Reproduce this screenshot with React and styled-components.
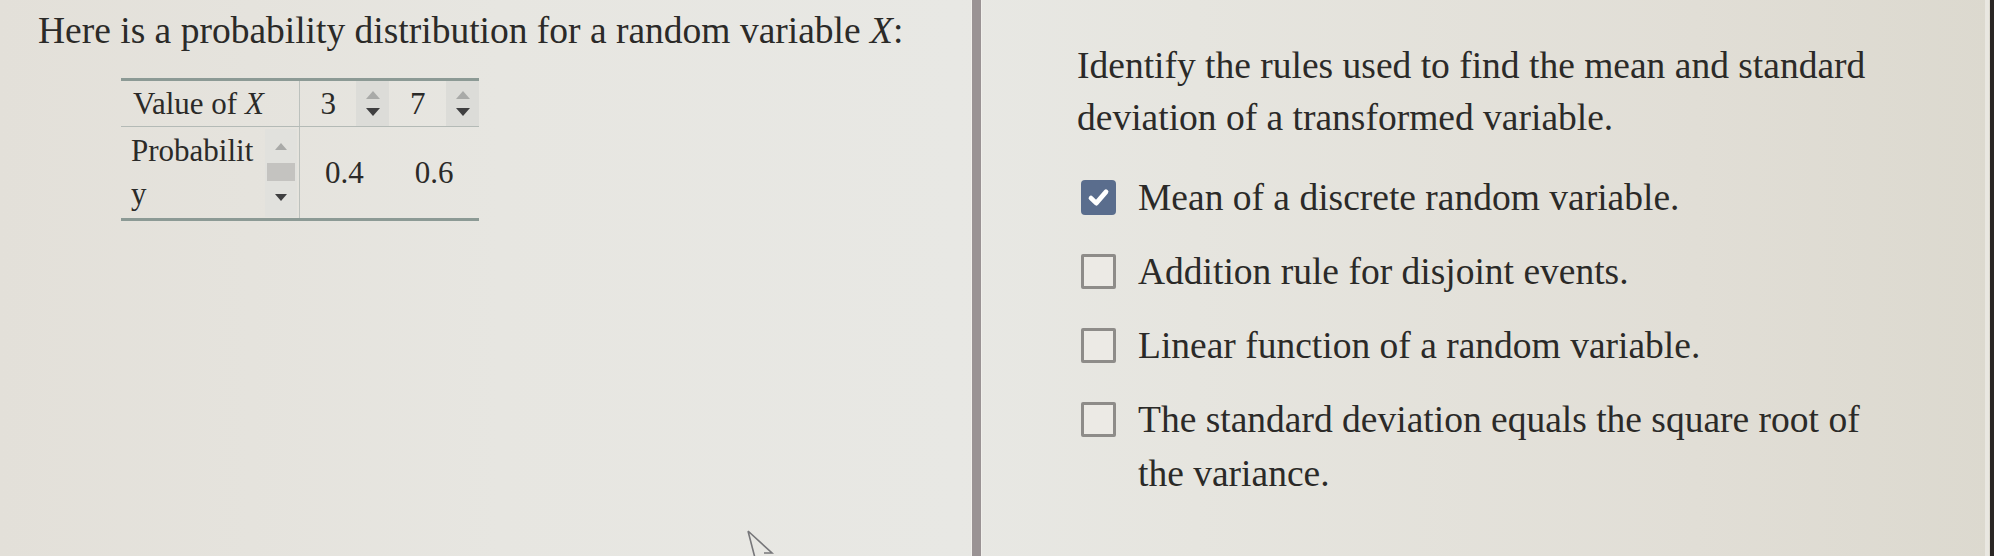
import React from "react";
import styled, { createGlobalStyle } from "styled-components";

const GlobalStyle = createGlobalStyle`
  html, body {
    margin: 0;
    padding: 0;
    overflow: hidden;
  }
  body {
    font-family: "Liberation Serif", "Times New Roman", serif;
    color: #2b2a28;
  }
`;

const options = [
  { label: "Mean of a discrete random variable.", checked: true },
  { label: "Addition rule for disjoint events.", checked: false },
  { label: "Linear function of a random variable.", checked: false },
  {
    label: "The standard deviation equals the square root of the variance.",
    checked: false,
  },
];

const App = () => {
  return (
    <Page>
      <GlobalStyle />
      <LeftPanel>
        <Title>
          Here is a probability distribution for a random variable <i>X</i>:
        </Title>
        <Table>
          <tbody>
            <tr>
              <HeadCell>
                Value of <i>X</i>
              </HeadCell>
              <ValueCell>
                <SpinBox>
                  <span>3</span>
                  <Spinner>
                    <Arrow up />
                    <Arrow />
                  </Spinner>
                </SpinBox>
              </ValueCell>
              <ValueCell>
                <SpinBox>
                  <span>7</span>
                  <Spinner>
                    <Arrow up />
                    <Arrow />
                  </Spinner>
                </SpinBox>
              </ValueCell>
            </tr>
            <tr>
              <HeadCell tall>
                <ScrollField>
                  <FieldText>Probability</FieldText>
                  <ScrollBar>
                    <Arrow up small />
                    <Thumb />
                    <Arrow small />
                  </ScrollBar>
                </ScrollField>
              </HeadCell>
              <ValueCell center>0.4</ValueCell>
              <ValueCell center>0.6</ValueCell>
            </tr>
          </tbody>
        </Table>
        <Cursor viewBox="0 0 30 30">
          <path
            d="M1 1 L8 28 M1 1 L25 23 L17 23"
            fill="none"
            stroke="#77777a"
            strokeWidth="1.6"
          />
        </Cursor>
      </LeftPanel>
      <Divider />
      <RightPanel>
        <Question>
          Identify the rules used to find the mean and standard deviation of a
          transformed variable.
        </Question>
        <OptionList>
          {options.map((o) => (
            <Option key={o.label}>
              <CheckBox checked={o.checked}>
                {o.checked && (
                  <svg viewBox="0 0 20 20" width="25" height="25">
                    <path
                      d="M4 10.5 L8.2 14.5 L16 5.5"
                      fill="none"
                      stroke="#ffffff"
                      strokeWidth="3.8"
                      strokeLinecap="round"
                      strokeLinejoin="round"
                    />
                  </svg>
                )}
              </CheckBox>
              <OptionText>{o.label}</OptionText>
            </Option>
          ))}
        </OptionList>
        <EdgeLine />
      </RightPanel>
    </Page>
  );
};

export default App;

const Page = styled.div`
  display: flex;
  width: 1994px;
  height: 556px;
  background: linear-gradient(
    90deg,
    #e3e0d9 0%,
    #e7e6e1 25%,
    #e8e8e4 48%,
    #e6e5df 60%,
    #e1ded6 85%,
    #dcd9cf 100%
  );
`;

const LeftPanel = styled.div`
  position: relative;
  width: 972px;
  padding: 9px 0 0 38px;
  box-sizing: border-box;
`;

const Title = styled.div`
  font-size: 37.5px;
  line-height: 44px;
  white-space: nowrap;

  i {
    font-style: italic;
  }
`;

const Table = styled.table`
  margin: 25px 0 0 83px;
  border-collapse: collapse;
  border-top: 3px solid #8c9a95;
  border-bottom: 3px solid #8c9a95;
  font-size: 31px;
`;

const HeadCell = styled.td`
  width: 178px;
  box-sizing: border-box;
  height: ${(p) => (p.tall ? "92px" : "47px")};
  padding: ${(p) => (p.tall ? "0 2px 0 10px" : "0 0 0 12px")};
  border-right: 1px solid #bcc1bd;
  border-bottom: 1px solid #b4bab6;
  vertical-align: ${(p) => (p.tall ? "top" : "middle")};
  white-space: nowrap;

  i {
    font-style: italic;
  }
`;

const ValueCell = styled.td`
  width: 90px;
  box-sizing: border-box;
  padding: 0;
  border-bottom: 1px solid #b4bab6;
  text-align: ${(p) => (p.center ? "center" : "left")};
  vertical-align: middle;
`;

const SpinBox = styled.div`
  display: flex;
  align-items: center;
  justify-content: space-between;
  height: 45px;
  padding-left: 21px;

  span {
    line-height: 1;
  }
`;

const Spinner = styled.div`
  display: flex;
  flex-direction: column;
  align-items: center;
  justify-content: center;
  gap: 9px;
  width: 33px;
  height: 45px;
  background: #dcdcd8;
`;

const Arrow = styled.div`
  width: 0;
  height: 0;
  border-left: ${(p) => (p.small ? "6px" : "7px")} solid transparent;
  border-right: ${(p) => (p.small ? "6px" : "7px")} solid transparent;
  ${(p) =>
    p.up
      ? `border-bottom: ${p.small ? "7px" : "8px"} solid #a9aaa8;`
      : `border-top: ${p.small ? "7px" : "8px"} solid #3f3f40;`}
`;

const ScrollField = styled.div`
  display: flex;
  justify-content: space-between;
  height: 91px;
`;

const FieldText = styled.div`
  width: 126px;
  padding-top: 2px;
  line-height: 43px;
  word-break: break-all;
  white-space: normal;
`;

const ScrollBar = styled.div`
  display: flex;
  flex-direction: column;
  align-items: center;
  justify-content: space-between;
  box-sizing: border-box;
  width: 32px;
  height: 88px;
  margin-top: 2px;
  padding: 14px 0 16px;
  background: #e1e1dd;
`;

const Thumb = styled.div`
  width: 28px;
  height: 18px;
  background: #c4c3c0;
`;

const Cursor = styled.svg`
  position: absolute;
  left: 747px;
  top: 530px;
  width: 30px;
  height: 30px;
`;

const Divider = styled.div`
  width: 9px;
  flex-shrink: 0;
  background: #9a9394;
  box-shadow: -1px 0 0 #f1f0ec, 1px 0 0 #f0efeb;
`;

const RightPanel = styled.div`
  position: relative;
  flex: 1;
  padding: 40px 0 0 96px;
  box-sizing: border-box;
`;

const Question = styled.div`
  width: 820px;
  font-size: 37.5px;
  line-height: 52px;
`;

const OptionList = styled.div`
  display: flex;
  flex-direction: column;
  gap: 20px;
  margin: 27px 0 0 4px;
`;

const Option = styled.div`
  display: flex;
  align-items: flex-start;
  gap: 22px;
`;

const CheckBox = styled.div`
  flex-shrink: 0;
  display: flex;
  align-items: center;
  justify-content: center;
  box-sizing: border-box;
  width: 35px;
  height: 35px;
  margin-top: 9px;
  border-radius: ${(p) => (p.checked ? "4px" : "2px")};
  background: ${(p) => (p.checked ? "#5a6d8d" : "#eceae5")};
  border: ${(p) => (p.checked ? "none" : "3px solid #8e8c89")};
`;

const OptionText = styled.div`
  width: 760px;
  font-size: 37.5px;
  line-height: 54px;
`;

const EdgeLine = styled.div`
  position: absolute;
  top: 0;
  right: 0;
  width: 4px;
  height: 100%;
  background: #2a2624;
  box-shadow: -22px 0 0 -20px #cfcbc1, -5px 0 0 #e9e7e1;
`;
